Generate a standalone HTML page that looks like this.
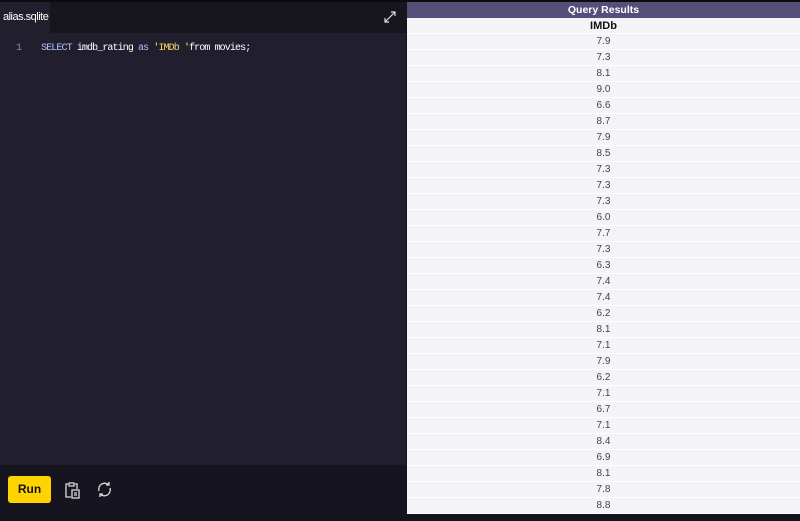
<!DOCTYPE html>
<html><head><style>
*{margin:0;padding:0;box-sizing:border-box}
body{width:800px;height:521px;background:#15141d;font-family:"Liberation Sans",sans-serif;position:relative;overflow:hidden}
#top{position:absolute;left:0;top:0;width:800px;height:2px;background:#0c0c10}
#ed{position:absolute;left:0;top:2px;width:406px;height:463px;background:#211f2e}
#tabbar{position:absolute;left:0;top:2px;width:406px;height:31px;background:#17161f}
#tab{position:absolute;left:0;top:2px;width:50px;height:31px;background:#211f2e;color:#fff;font-size:11px;line-height:30px;padding-left:3px;letter-spacing:-0.5px;white-space:nowrap}
#code{position:absolute;left:16px;top:43px;font-family:"Liberation Mono",monospace;font-size:10px;letter-spacing:-0.9px;color:#fff;white-space:pre}
#code .n{color:#8b8aa0;margin-right:20px}
.k{color:#b0c4ff}.s{color:#ffd866}
#bot{position:absolute;left:0;top:465px;width:406px;height:56px;background:#16151f}
#run{position:absolute;left:8px;top:476px;width:43px;height:27px;background:#ffd300;border-radius:3px;font-size:12px;font-weight:bold;text-align:center;line-height:27px;color:#111}
#res{position:absolute;left:407px;top:2px;width:393px;height:512px;background:#f4f4f8}
#hd{height:16px;background:#55507a;color:#fff;font-size:10.5px;font-weight:bold;text-align:center;line-height:16px}
.r{height:16px;border-bottom:1px solid #fff;text-align:center;font-size:10px;line-height:16px;color:#444}
.h{font-weight:bold;color:#111;font-size:11px}
</style></head><body>
<div id="top"></div>
<div id="ed"></div>
<div id="tabbar"></div>
<div id="tab">alias.sqlite</div>
<svg style="position:absolute;left:383px;top:10px" width="14" height="14" viewBox="0 0 14 14" fill="none" stroke="#ddd" stroke-width="1.2"><path d="M2 12L12 2M8 2h4v4M2 8v4h4"/></svg>
<div id="code"><span class="n">1</span><span class="k">SELECT</span> imdb_rating <span class="k">as</span> <span class="s">'IMDb '</span>from movies;</div>
<div id="bot"></div>
<div id="run">Run</div>
<svg style="position:absolute;left:63px;top:481px" width="18" height="18" viewBox="0 0 18 18" fill="none" stroke="#ddd" stroke-width="1.3"><path d="M5 3H3v13h5M12 3h2v5M6 2h5v3H6z"/><rect x="9" y="9" width="7" height="8"/><path d="M11 12h3M11 14h3"/></svg>
<svg style="position:absolute;left:96px;top:481px" width="17" height="17" viewBox="0 0 17 17" fill="none" stroke="#ddd" stroke-width="1.3"><path d="M3 10A6 6 0 0 1 13 4M14 7A6 6 0 0 1 4 13M13 1v3h-3M4 16v-3h3"/></svg>
<div id="res"><div id="hd">Query Results</div><div class="r h">IMDb</div>
<div class="r">7.9</div><div class="r">7.3</div><div class="r">8.1</div><div class="r">9.0</div><div class="r">6.6</div><div class="r">8.7</div><div class="r">7.9</div><div class="r">8.5</div><div class="r">7.3</div><div class="r">7.3</div><div class="r">7.3</div><div class="r">6.0</div><div class="r">7.7</div><div class="r">7.3</div><div class="r">6.3</div><div class="r">7.4</div><div class="r">7.4</div><div class="r">6.2</div><div class="r">8.1</div><div class="r">7.1</div><div class="r">7.9</div><div class="r">6.2</div><div class="r">7.1</div><div class="r">6.7</div><div class="r">7.1</div><div class="r">8.4</div><div class="r">6.9</div><div class="r">8.1</div><div class="r">7.8</div><div class="r">8.8</div>
</div>
</body></html>
